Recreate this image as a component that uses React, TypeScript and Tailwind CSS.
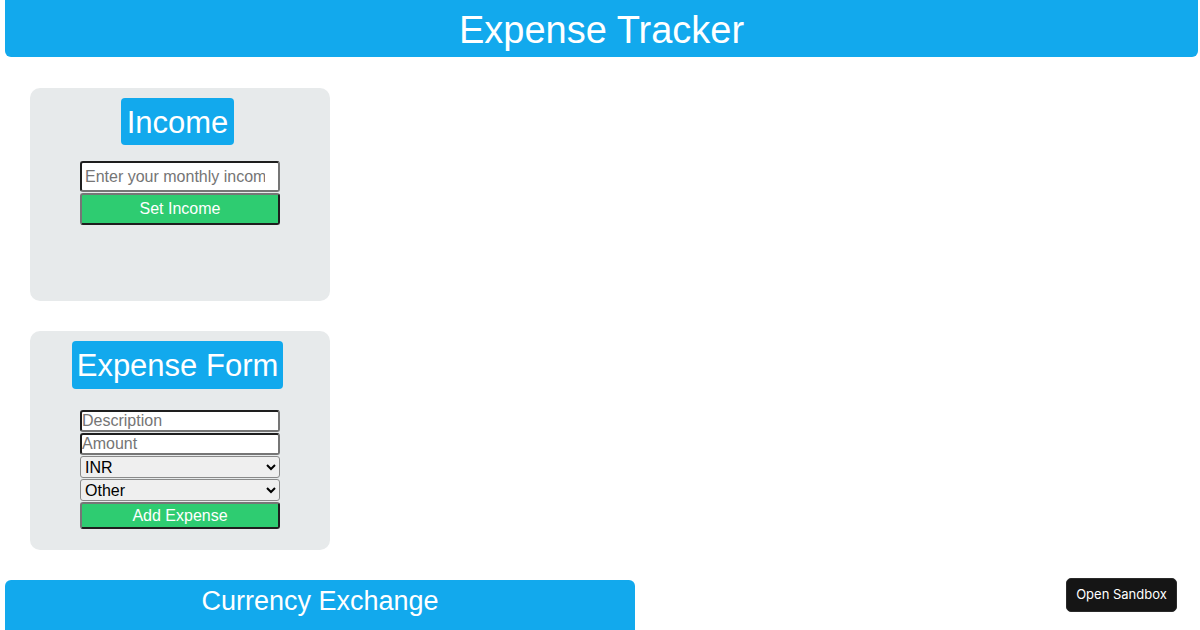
import React from "react";

const inputCls =
  "block w-[200px] border-2 border-solid border-t-[#1e1e1e] border-l-[#1e1e1e] border-b-[#767676] border-r-[#767676] rounded-[3px] bg-white text-[16px] text-black placeholder:text-[#757575] outline-none";
const buttonCls =
  "block w-[200px] border-2 border-solid border-t-[#767676] border-l-[#767676] border-b-[#1e1e1e] border-r-[#1e1e1e] rounded-[3px] bg-[#2ecc71] text-white text-[16px] leading-none";
const selectCls =
  "block w-[200px] h-[22px] border border-solid border-[#8a8a8a] rounded-[3px] bg-[#efefef] text-black text-[16px] pl-0 leading-none";

export default function App() {
  return (
    <div className="w-[1200px] min-h-[630px] bg-white font-['Liberation_Sans',Arial,sans-serif] overflow-hidden">
      <div className="ml-[5px] mr-[2px] h-[57px] rounded-b-[6px] bg-[#12a9ed] pt-[9px] text-center text-white text-[38px] leading-[1.15]">
        Expense Tracker
      </div>

      <div className="pl-[30px] mt-[31px]">
        <div className="w-[300px] h-[213px] rounded-[10px] bg-[#e7eaeb] pt-[10px] flex flex-col items-center">
          <div className="mr-[5px] w-[113px] h-[47px] rounded-[4px] bg-[#12a9ed] pt-[7px] text-center text-white text-[31px] leading-[1.15]">
            Income
          </div>
          <div className="mt-[16px] flex flex-col gap-[1px]">
            <input
              className={inputCls + " h-[31px] pl-[3px] pr-[13px] text-[16px]"}
              placeholder="Enter your monthly income"
            />
            <button className={buttonCls + " h-[32px]"}>Set Income</button>
          </div>
        </div>

        <div className="mt-[30px] w-[300px] h-[219px] rounded-[10px] bg-[#e7eaeb] pt-[10px] flex flex-col items-center">
          <div className="mr-[5px] w-[211px] h-[48px] rounded-[4px] bg-[#12a9ed] pt-[7px] text-center text-white text-[31px] leading-[1.15]">
            Expense Form
          </div>
          <div className="mt-[21px] flex flex-col gap-[1px]">
            <input className={inputCls + " h-[22px] px-0"} placeholder="Description" />
            <input className={inputCls + " h-[22px] px-0"} placeholder="Amount" />
            <select className={selectCls} defaultValue="INR">
              <option>INR</option>
              <option>USD</option>
              <option>EUR</option>
            </select>
            <select className={selectCls} defaultValue="Other">
              <option>Food</option>
              <option>Travel</option>
              <option>Other</option>
            </select>
            <button className={buttonCls + " h-[27px]"}>Add Expense</button>
          </div>
        </div>
      </div>

      <div className="mt-[30px] ml-[5px] w-[630px] h-[56px] rounded-t-[6px] bg-[#12a9ed] pt-[6px] text-center text-white text-[27px] leading-[1.15]">
        Currency Exchange
      </div>

      <button className="fixed right-[23px] bottom-[18px] w-[111px] h-[34px] rounded-[5px] border border-[#2a2a2a] bg-[#151515] text-white text-[13px] font-['Inter',sans-serif]">
        Open Sandbox
      </button>
    </div>
  );
}
